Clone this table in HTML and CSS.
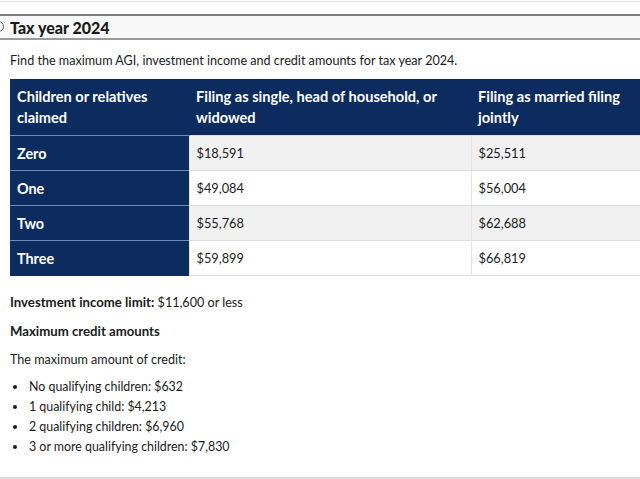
FILE: index.html
```html
<!DOCTYPE html>
<html lang="en">
<head>
<meta charset="utf-8">
<title>Tax year 2024</title>
<link rel="stylesheet" href="styles.css">
</head>
<body>
<div class="page">
  <div class="topstrip"></div>
  <div class="acc-head">
    <span class="acc-icon"></span>
    <h2 class="acc-title">Tax year 2024</h2>
  </div>
  <div class="acc-body">
    <p class="intro">Find the maximum AGI, investment income and credit amounts for tax year 2024.</p>
    <div class="table-wrap">
      <table class="eitc">
        <thead>
          <tr>
            <th class="c1">Children or relatives claimed</th>
            <th class="c2">Filing as single, head of household, or widowed</th>
            <th class="c3">Filing as married filing jointly</th>
          </tr>
        </thead>
        <tbody>
          <tr class="odd"><th>Zero</th><td>$18,591</td><td>$25,511</td></tr>
          <tr><th>One</th><td>$49,084</td><td>$56,004</td></tr>
          <tr class="odd"><th>Two</th><td>$55,768</td><td>$62,688</td></tr>
          <tr><th>Three</th><td>$59,899</td><td>$66,819</td></tr>
        </tbody>
      </table>
    </div>
    <p class="limit"><strong>Investment income limit:</strong> $11,600 or less</p>
    <p class="sub"><strong>Maximum credit amounts</strong></p>
    <p class="lead">The maximum amount of credit:</p>
    <ul class="amounts">
      <li>No qualifying children: $632</li>
      <li>1 qualifying child: $4,213</li>
      <li>2 qualifying children: $6,960</li>
      <li>3 or more qualifying children: $7,830</li>
    </ul>
  </div>
  <div class="bottom-line"></div>
</div>
</body>
</html>
```
FILE: styles.css
```css
html, body {
  margin: 0;
  padding: 0;
  background: #ffffff;
}
body {
  font-family: Lato, "Noto Sans", "Liberation Sans", sans-serif;
  color: #1b1b1b;
  font-size: 12.6px;
  width: 640px;
  height: 479px;
  overflow: hidden;
}
.page {
  width: 640px;
  height: 479px;
  display: flex;
  flex-direction: column;
  overflow: hidden;
}
.topstrip {
  height: 1px;
  margin-top: 1px;
  background: #e2e4e4;
  margin-bottom: 12px;
}
.acc-head {
  border-top: 2px solid #7d8080;
  border-bottom: 2px solid #999c9c;
  background: #f7f8f7;
  height: 22px;
  display: flex;
  align-items: center;
  position: relative;
}
.acc-icon {
  position: absolute;
  left: -7px;
  top: 5px;
  width: 9px;
  height: 9px;
  border: 1.5px solid #666;
  border-radius: 50%;
}
.acc-title {
  margin: 1px 0 0 10px;
  font-size: 16px;
  font-weight: 900;
  color: #1b1b1b;
}
.acc-body {
  padding-left: 10px;
  flex: 1;
}
.intro {
  margin: 11px 0 8px;
  line-height: 20px;
}
.table-wrap {
  width: 630px;
  overflow: hidden;
}
.eitc {
  border-collapse: collapse;
  width: 630px;
  table-layout: fixed;
}
.eitc thead th {
  background: #0c2b5e;
  color: #fff;
  font-weight: 700;
  text-align: left;
  vertical-align: middle;
  font-size: 14.6px;
  line-height: 21px;
  padding: 7px 7px;
  height: 42px;
}
.eitc .c1 { width: 165px; }
.eitc .c2 { width: 268px; }
.eitc .c3 { width: auto; }
.eitc tbody th {
  background: #0c2b5e;
  color: #fff;
  font-weight: 700;
  text-align: left;
  font-size: 14.4px;
  padding: 0 7px;
  height: 34px;
  border-top: 1px solid #6d8bbb;
}
.eitc tbody td {
  padding: 0 7px;
  height: 34px;
  border-top: 1px solid #dedede;
  border-left: 1px solid #e4e4e4;
  background: #fff;
  font-size: 12.8px;
}
.eitc tbody tr.odd td {
  background: #f1f1f1;
}
.eitc tbody tr:last-child td {
  border-bottom: 1px solid #dedede;
}
.limit {
  margin: 16px 0 0;
  line-height: 20px;
}
.limit strong, .sub strong {
  font-size: 13.2px;
}
.sub {
  margin: 8px 0 0;
  line-height: 20px;
}
.lead {
  margin: 8px 0 0;
  line-height: 20px;
}
.amounts {
  margin: 7px 0 0;
  padding-left: 18px;
  line-height: 20px;
  font-size: 12.4px;
}
.amounts li {
  padding-left: 1px;
}
.bottom-line {
  height: 2px;
  background: #dcdcdc;
}
```
